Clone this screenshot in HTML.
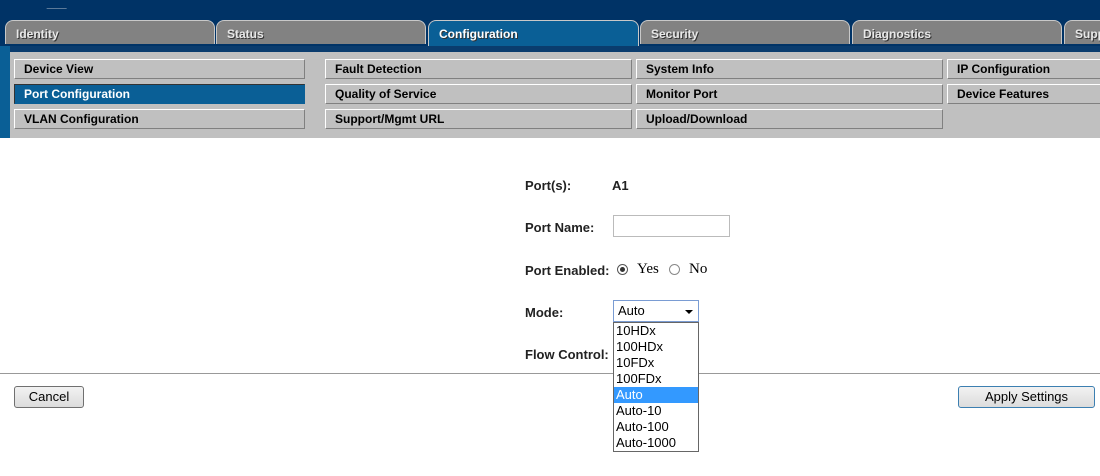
<html><head><style>
body{margin:0;width:1100px;height:476px;position:relative;overflow:hidden;background:#fff;font-family:"Liberation Sans",Arial,sans-serif}
.a{position:absolute}
.tab{position:absolute;top:20px;height:24px;background:#828282;border:1px solid #c8c8c8;border-bottom:none;border-radius:8px 8px 0 0;color:#e8e8e8;font-weight:bold;font-size:12px;line-height:26px;padding-left:10px;box-sizing:border-box;text-shadow:1px 1px 0 #333}
.b{position:absolute;height:20px;background:#c0c0c0;border-top:1px solid #fff;border-left:1px solid #fff;border-right:1px solid #808080;border-bottom:1px solid #808080;box-sizing:border-box;font-size:12px;font-weight:bold;line-height:19px;padding-left:9px;color:#000}
.l{position:absolute;left:525px;font-size:13px;font-weight:bold;color:#222}
.btn{position:absolute;height:22px;border:1px solid #707070;border-radius:3px;background:linear-gradient(#f2f2f2,#dcdcdc);font-size:13px;text-align:center;line-height:20px;box-sizing:border-box;color:#000}
.opt{height:16px;line-height:16px;padding-left:2px;font-size:13px}
</style></head><body>
<div class="a" style="left:0;top:0;width:1100px;height:52px;background:#003366"></div>
<div class="a" style="left:50px;top:0;width:20px;height:8px;border-bottom:1px solid #9ab;transform:skewX(-40deg);opacity:.6"></div>
<div class="tab" style="left:5px;width:210px">Identity</div>
<div class="tab" style="left:216px;width:210px">Status</div>
<div class="tab" style="left:428px;width:211px;background:#0a5f96;height:27px;color:#fff">Configuration</div>
<div class="tab" style="left:640px;width:210px">Security</div>
<div class="tab" style="left:852px;width:210px">Diagnostics</div>
<div class="tab" style="left:1064px;width:60px">Supp</div>
<div class="a" style="left:0;top:46px;width:1100px;height:6px;background:#0a3c6e"></div>
<div class="a" style="left:0;top:52px;width:1100px;height:86px;background:#c0c0c0"></div>
<div class="a" style="left:0;top:46px;width:10px;height:92px;background:#0a5f96"></div>
<div class="b" style="left:14px;top:59px;width:291px">Device View</div>
<div class="b" style="left:14px;top:84px;width:291px;background:#0a5f96;color:#fff;border-color:#333 #0a5f96 #0a5f96 #333">Port Configuration</div>
<div class="b" style="left:14px;top:109px;width:291px">VLAN Configuration</div>
<div class="b" style="left:325px;top:59px;width:307px">Fault Detection</div>
<div class="b" style="left:325px;top:84px;width:307px">Quality of Service</div>
<div class="b" style="left:325px;top:109px;width:307px">Support/Mgmt URL</div>
<div class="b" style="left:636px;top:59px;width:307px">System Info</div>
<div class="b" style="left:636px;top:84px;width:307px">Monitor Port</div>
<div class="b" style="left:636px;top:109px;width:307px">Upload/Download</div>
<div class="b" style="left:947px;top:59px;width:160px">IP Configuration</div>
<div class="b" style="left:947px;top:84px;width:160px">Device Features</div>
<div class="l" style="top:178px">Port(s):</div>
<div class="l" style="top:178px;left:612px">A1</div>
<div class="l" style="top:220px">Port Name:</div>
<div class="a" style="left:613px;top:215px;width:117px;height:22px;border:1px solid #bbb;box-sizing:border-box"></div>
<div class="l" style="top:263px">Port Enabled:</div>
<div class="a" style="left:617px;top:264px;width:11px;height:11px;border:1px solid #555;border-radius:50%;box-sizing:border-box"><div style="margin:2px;width:5px;height:5px;border-radius:50%;background:#333"></div></div>
<div class="a" style="left:637px;top:261px;font-family:'Liberation Serif',serif;font-size:15px">Yes</div>
<div class="a" style="left:669px;top:264px;width:11px;height:11px;border:1px solid #888;border-radius:50%;box-sizing:border-box"></div>
<div class="a" style="left:689px;top:261px;font-family:'Liberation Serif',serif;font-size:15px">No</div>
<div class="l" style="top:305px">Mode:</div>
<div class="a" style="left:613px;top:300px;width:86px;height:22px;border:1px solid #7a9cd3;box-sizing:border-box;font-size:13px;line-height:20px;padding-left:4px">Auto<span style="position:absolute;right:5px;top:9px;border:4px solid transparent;border-top:4px solid #000"></span></div>
<div class="l" style="top:347px">Flow Control:</div>
<div class="a" style="left:0;top:373px;width:1100px;height:1px;background:#999"></div>
<div class="btn" style="left:14px;top:386px;width:70px">Cancel</div>
<div class="btn" style="left:958px;top:386px;width:137px;border-color:#3c7fb1">Apply Settings</div>
<div class="a" style="left:613px;top:322px;width:86px;height:130px;border:1px solid #666;background:#fff;box-sizing:border-box">
<div class="opt">10HDx</div><div class="opt">100HDx</div><div class="opt">10FDx</div><div class="opt">100FDx</div>
<div class="opt" style="background:#3399ff;color:#fff">Auto</div><div class="opt">Auto-10</div><div class="opt">Auto-100</div><div class="opt">Auto-1000</div>
</div>
</body></html>
